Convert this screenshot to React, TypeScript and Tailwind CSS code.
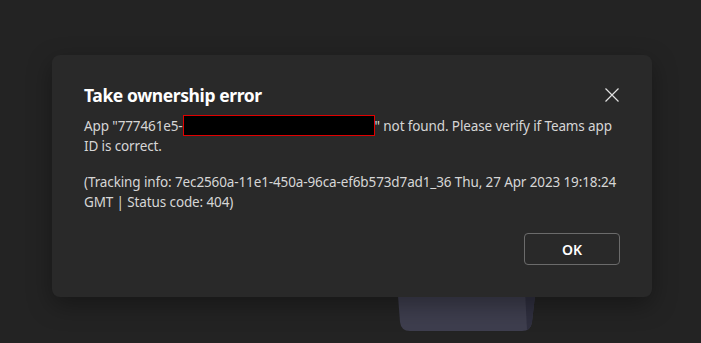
import React from "react";

export default function App() {
  return (
    <div className="relative w-[701px] h-[343px] overflow-hidden bg-[#232323]" style={{ fontFamily: '"Segoe UI", "Noto Sans", sans-serif' }}>
      <svg className="absolute left-[396px] top-[270px]" width="142" height="62" viewBox="0 0 142 62">
        <path d="M0 0 H142 L136 52 Q135 61 126 61 H14 Q5 61 4 52 Z" fill="#3e3e4e" />
        <path d="M128 0 H142 L136 52 Q135 58 131 60 Z" fill="#2f2f3f" />
      </svg>
      <div className="pl-[52px] pt-[55px]">
        <div className="relative w-[600px] rounded-lg bg-[#292929] px-8 pt-7 pb-8 shadow-[0_8px_24px_rgba(0,0,0,0.35)]">
          <div className="flex h-6 items-center justify-between">
            <div className="text-[17.5px] font-bold leading-6 tracking-[-0.4px] text-white">Take ownership error</div>
            <svg width="16" height="16" viewBox="0 0 16 16" className="text-[#e0e0e0]">
              <path d="M1.5 1.5 L14.5 14.5 M14.5 1.5 L1.5 14.5" stroke="currentColor" strokeWidth="1.2" />
            </svg>
          </div>
          <div className="mt-2 text-[13.5px] leading-5 tracking-[-0.12px] text-[#d6d6d6]">
            <div className="flex items-center whitespace-nowrap">
              <span>App "777461e5-</span>
              <span className="inline-block h-[21px] w-[192px] border border-[#e00000] bg-black" />
              <span>" not found. Please verify if Teams app</span>
            </div>
            <div>ID is correct.</div>
          </div>
          <div className="mt-4 text-[13.5px] leading-5 tracking-[-0.12px] text-[#d6d6d6]">
            <div className="whitespace-nowrap">(Tracking info: 7ec2560a-11e1-450a-96ca-ef6b573d7ad1_36 Thu, 27 Apr 2023 19:18:24</div>
            <div>GMT | Status code: 404)</div>
          </div>
          <div className="mt-[21px] flex justify-end">
            <button className="h-8 w-24 rounded border border-[#6b6b6b] bg-[#292929] text-[14px] font-semibold text-white">OK</button>
          </div>
        </div>
      </div>
    </div>
  );
}
